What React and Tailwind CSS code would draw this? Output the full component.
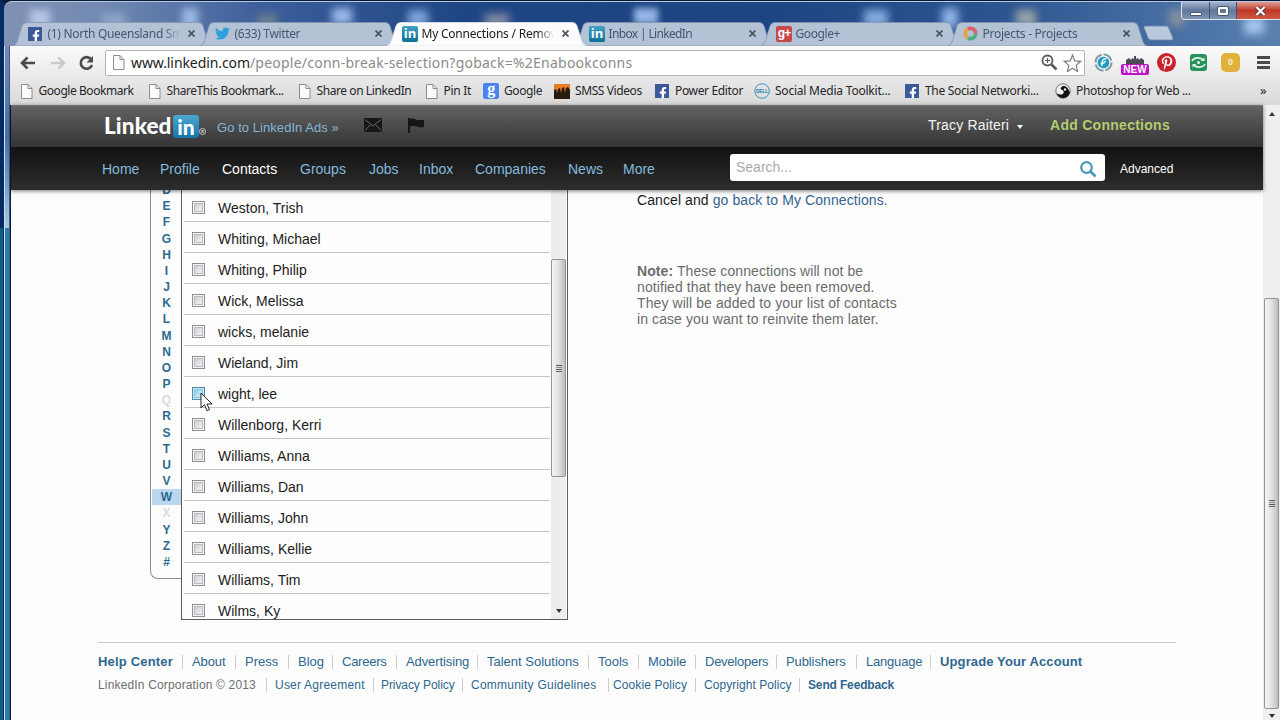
import { FaFacebookF, FaTwitter, FaPinterestP } from 'react-icons/fa'

const names = [
  'Weston, Trish', 'Whiting, Michael', 'Whiting, Philip', 'Wick, Melissa', 'wicks, melanie',
  'Wieland, Jim', 'wight, lee', 'Willenborg, Kerri', 'Williams, Anna', 'Williams, Dan',
  'Williams, John', 'Williams, Kellie', 'Williams, Tim', 'Wilms, Ky',
]

const letters = 'DEFGHIJKLMNOPQRSTUVWXYZ#'.split('')
const emptyLetters = ['Q', 'X']

const tabs = [
  { title: '(1) North Queensland Sm', icon: 'facebook', track: 'tracking-[-0.3px]' },
  { title: '(633) Twitter', icon: 'twitter', track: 'tracking-[-0.35px]' },
  { title: 'My Connections / Remove', icon: 'linkedin', track: 'tracking-[-0.22px]', active: true },
  { title: 'Inbox | LinkedIn', icon: 'linkedin', track: 'tracking-[-0.65px]' },
  { title: 'Google+', icon: 'gplus', track: 'tracking-[-0.4px]' },
  { title: 'Projects - Projects', icon: 'ring', track: 'tracking-[-0.27px]' },
]

const bookmarks = [
  { label: 'Google Bookmark', icon: 'page', box: 'w-[128px]', track: 'tracking-[-0.45px]' },
  { label: 'ShareThis Bookmark...', icon: 'page', box: 'w-[150px]', track: 'tracking-[-0.42px]' },
  { label: 'Share on LinkedIn', icon: 'page', box: 'w-[127px]', track: 'tracking-[-0.42px]' },
  { label: 'Pin It', icon: 'page', box: 'w-[57px]', track: 'tracking-[-0.3px]' },
  { label: 'Google', icon: 'google', box: 'w-[71px]', track: 'tracking-[-0.4px]' },
  { label: 'SMSS Videos', icon: 'smss', box: 'w-[101px]', track: 'tracking-[-0.4px]' },
  { label: 'Power Editor', icon: 'facebook', box: 'w-[99px]', track: 'tracking-[-0.35px]' },
  { label: 'Social Media Toolkit...', icon: 'dell', box: 'w-[151px]', track: 'tracking-[-0.22px]' },
  { label: 'The Social Networki...', icon: 'facebook', box: 'w-[150px]', track: 'tracking-[-0.32px]' },
  { label: 'Photoshop for Web ...', icon: 'yin', box: 'w-[200px]', track: 'tracking-[-0.34px]' },
]

const nav = [
  { label: 'Home', box: 'w-[58px]' },
  { label: 'Profile', box: 'w-[62px]' },
  { label: 'Contacts', box: 'w-[78px]', current: true },
  { label: 'Groups', box: 'w-[69px]' },
  { label: 'Jobs', box: 'w-[50px]' },
  { label: 'Inbox', box: 'w-[56px]' },
  { label: 'Companies', box: 'w-[93px]' },
  { label: 'News', box: 'w-[55px]' },
  { label: 'More', box: 'w-[40px]' },
]

const footerTop = [
  { label: 'Help Center', box: 'w-[84px] font-bold tracking-[0.18px]' },
  { label: 'About', box: 'w-[53px] tracking-[-0.1px]' },
  { label: 'Press', box: 'w-[53px]' },
  { label: 'Blog', box: 'w-[44px]' },
  { label: 'Careers', box: 'w-[64px] tracking-[-0.25px]' },
  { label: 'Advertising', box: 'w-[81px] tracking-[-0.1px]' },
  { label: 'Talent Solutions', box: 'w-[111px]' },
  { label: 'Tools', box: 'w-[50px]' },
  { label: 'Mobile', box: 'w-[57px]' },
  { label: 'Developers', box: 'w-[81px] tracking-[-0.25px]' },
  { label: 'Publishers', box: 'w-[80px] tracking-[-0.1px]' },
  { label: 'Language', box: 'w-[74px] tracking-[-0.2px]' },
  { label: 'Upgrade Your Account', box: 'font-bold tracking-[0.12px]' },
]

const footerBottom = [
  { label: 'User Agreement', box: 'w-[107px] pl-2 tracking-[0.22px]' },
  { label: 'Privacy Policy', box: 'w-[89px] pl-[7px] tracking-[-0.08px]' },
  { label: 'Community Guidelines', box: 'w-[146px] pl-2 tracking-[0.24px]' },
  { label: 'Cookie Policy', box: 'w-[87px] pl-1 tracking-[0.1px]' },
  { label: 'Copyright Policy', box: 'w-[104px] pl-2 tracking-[0.05px]' },
  { label: 'Send Feedback', box: 'pl-2 font-bold tracking-[-0.15px]' },
]

function PageIcon() {
  return (
    <svg width="12" height="15" viewBox="0 0 12 15" fill="#fafafa" stroke="#8c8c8c">
      <path d="M.5.5h6.5l4 4v10H.5z" />
      <path d="M7 .5v4h4" fill="none" />
    </svg>
  )
}

function SiteIcon({ name }) {
  switch (name) {
    case 'facebook':
      return (
        <div className="flex h-3.5 w-3.5 items-end justify-end overflow-hidden bg-[#3b5998] text-white">
          <FaFacebookF size={12} className="-mb-px" />
        </div>
      )
    case 'twitter':
      return <FaTwitter size={15} color="#2da2d8" />
    case 'linkedin':
      return (
        <div className="flex h-4 w-4 items-center justify-center rounded-xs bg-gradient-to-b from-[#3fa3c4] to-[#0e6f96] pb-px font-['Open_Sans',sans-serif] text-[13px] leading-none font-bold text-white">
          in
        </div>
      )
    case 'gplus':
      return (
        <div className="flex h-4 w-4 items-center justify-center rounded-xs bg-[#c9494b] pb-0.5 font-['Liberation_Sans',sans-serif] text-[12px] leading-none font-bold tracking-[-1px] text-white">
          g+
        </div>
      )
    case 'ring':
      return (
        <svg width="15" height="15" viewBox="0 0 16 16" fill="none" strokeWidth="4">
          <circle cx="8" cy="8" r="5.5" stroke="#4bb08a" pathLength="3" strokeDasharray="1 2" />
          <circle cx="8" cy="8" r="5.5" stroke="#e2a34b" pathLength="3" strokeDasharray="1 2" strokeDashoffset="-1" />
          <circle cx="8" cy="8" r="5.5" stroke="#d9606c" pathLength="3" strokeDasharray="1 2" strokeDashoffset="-2" />
        </svg>
      )
    case 'google':
      return (
        <div className="flex h-4 w-4 items-center justify-center rounded-xs bg-[#4a83ee] pb-1 font-['Liberation_Serif',serif] text-[16px] leading-none font-bold text-white">
          g
        </div>
      )
    case 'smss':
      return (
        <svg width="16" height="15" viewBox="0 0 16 15">
          <path d="M0 0h16v15H0z" fill="#e87f22" />
          <path d="M0 6l2-1 1 4 1-4 2-1 1 5 1-5 2-1 1 6 1-5 2-1 2 3v9H0z" fill="#2a1b10" />
        </svg>
      )
    case 'dell':
      return (
        <svg width="16" height="16" viewBox="0 0 16 16">
          <circle cx="8" cy="8" r="7.3" fill="none" stroke="#3a96c4" />
          <text x="8" y="10" textAnchor="middle" fontFamily="Liberation Sans" fontSize="5" fontWeight="700" fill="#1c7fb5">DELL</text>
        </svg>
      )
    case 'yin':
      return (
        <svg width="16" height="16" viewBox="0 0 16 16">
          <circle cx="8" cy="8" r="7.2" fill="#f4f4f4" stroke="#555" strokeWidth="0.8" />
          <path d="M1.500 10c3 2 6 2 7 0s-1-3-3-4C6 3 9 2 11.500 4S14 9 15 9c-1 4-4 6-7 6s-5.500-2-6.500-5z" fill="#111" />
          <circle cx="10" cy="6.500" r="1.300" fill="#eee" />
        </svg>
      )
    default:
      return <PageIcon />
  }
}

function Tab({ tab }) {
  return (
    <div className={tab.active ? 'relative z-10 h-6 w-[187px] shrink-0' : 'relative h-6 w-[187px] shrink-0'}>
      <svg className="absolute top-0 left-0" width="199" height="24" viewBox="0 0 199 24">
        <path
          d="M0 24C3 23 4 20 5 17L9 4Q10 .5 14 .5H185Q189 .5 190 4L194 17C195 20 196 23 199 24z"
          fill={tab.active ? '#fcfcfd' : '#b3c2d5'}
          stroke={tab.active ? '#dfe6ee' : '#8497b4'}
          strokeWidth="0.8"
        />
      </svg>
      <div className="relative flex h-[23px] items-center pl-[15px]">
        <div className="flex w-[19.5px] shrink-0 items-center">
          <SiteIcon name={tab.icon} />
        </div>
        <div
          className={`w-[132px] overflow-hidden text-[12px] whitespace-nowrap [mask-image:linear-gradient(to_right,#000_88%,transparent)] ${tab.track} ${tab.active ? 'text-[#1c1c1c]' : 'text-[#46566c]'}`}
        >
          {tab.title}
        </div>
        <svg className="ml-[8px] shrink-0" width="7" height="7" viewBox="0 0 7 7" stroke="#4c5664" strokeWidth="1.8">
          <path d="M.5.5l6 6M6.500.5l-6 6" />
        </svg>
      </div>
    </div>
  )
}

// desktop icons showing through the glass title bar
function GlassBlobs() {
  return (
    <div className="absolute inset-0 overflow-hidden">
      <div className="absolute top-2 left-[26px] h-4 w-5 bg-[#b8cbe8] blur-[4px]" />
      <div className="absolute top-3 left-[98px] h-3 w-6 bg-[#8fa8c8] blur-[4px]" />
      <div className="absolute top-1.5 left-[178px] h-5 w-4 bg-[#9dbbe6] blur-[4px]" />
      <div className="absolute top-3 left-[253px] h-3 w-5 bg-[#6d7f8c] blur-[4px]" />
      <div className="absolute top-1.5 left-[328px] h-4 w-5 bg-[#9bbcec] blur-[4px]" />
      <div className="absolute top-2 left-[404px] h-4 w-5 bg-[#7ea6dc] blur-[4px]" />
      <div className="absolute top-3 left-[481px] h-3 w-6 bg-[#8b8fa4] blur-[4px]" />
      <div className="absolute top-1.5 left-[630px] h-4 w-6 bg-[#94b5e4] blur-[3px]" />
      <div className="absolute top-2 left-[860px] h-4 w-6 bg-[#88ade0] blur-[4px]" />
      <div className="absolute top-1.5 left-[938px] h-5 w-4 bg-[#8fb4e6] blur-[4px]" />
      <div className="absolute top-2 left-[1012px] h-4 w-5 bg-[#98a5a8] blur-[4px]" />
      <div className="absolute top-2 left-[1165px] h-4 w-4 bg-[#8590a0] blur-[4px]" />
      <div className="absolute top-4 left-[1240px] h-4 w-5 bg-[#a5c8f0] blur-[4px]" />
    </div>
  )
}

function TitleBar() {
  return (
    <div className="relative flex h-[45px] items-end justify-between rounded-tl-lg border-t border-[#b9cbe4] bg-[linear-gradient(to_right,#7f92b4,#7189b2_8%,#3d5f9b_20%,#1f4684_36%,#1d4583_60%,#2c5590_78%,#5a80b0)]">
      <GlassBlobs />
      <div className="relative flex pl-[9px]">
        {tabs.map((tab) => (
          <Tab key={tab.title} tab={tab} />
        ))}
        <svg className="mt-[3px] ml-[8px]" width="32" height="16" viewBox="0 0 32 16">
          <path d="M1 2.500Q.5 1 2.500 1H23Q25 1 25.500 2.500L30 13Q30.500 15 28.500 15H8Q6 15 5 13z" fill="#b9c8dc" stroke="#6d86ab" strokeWidth="0.8" />
        </svg>
      </div>
      <div className="relative flex h-[18px] self-start overflow-hidden rounded-bl border-b border-l border-white/80">
        <div className="flex w-[28px] items-center justify-center border-r border-[#41546f] bg-gradient-to-b from-[#a4b4cb] via-[#61789c] to-[#7f95b5] pt-1.5">
          <div className="h-[4px] w-3 rounded-[1px] border border-[#4a5870] bg-white" />
        </div>
        <div className="flex w-[27px] items-center justify-center border-r border-[#41546f] bg-gradient-to-b from-[#a4b4cb] via-[#61789c] to-[#7f95b5]">
          <div className="h-[8px] w-[10px] rounded-[1px] border-2 border-white outline outline-[#4a5870]" />
        </div>
        <div className="flex w-[43px] items-center justify-center bg-gradient-to-b from-[#dd9a90] via-[#bf3527] to-[#cf5a43] pl-1">
          <svg width="11" height="10" viewBox="0 0 11 10">
            <path d="M1.500 1l8 8M9.500 1l-8 8" stroke="#5d2b2b" strokeWidth="4" />
            <path d="M1.500 1l8 8M9.500 1l-8 8" stroke="#fff" strokeWidth="2.4" />
          </svg>
        </div>
      </div>
    </div>
  )
}

function Toolbar() {
  return (
    <div className="flex h-[33px] items-center">
      <div className="flex w-[95px] items-center pl-[9px]">
        <svg width="80" height="18" viewBox="0 0 80 18" fill="none" strokeWidth="2.6">
          <path d="M16 9H3M8.500 3.500L3 9l5.500 5.500" stroke="#4b4b4b" />
          <path d="M32 9h13M39.500 3.500L45 9l-5.500 5.500" stroke="#cbcbcb" />
          <path d="M72 5.200A5.800 5.800 0 1 0 73 11" stroke="#4b4b4b" />
          <path d="M74 2v6.500h-6.500z" fill="#4b4b4b" />
        </svg>
      </div>
      <div className="flex h-[26px] w-[980px] items-center rounded-xs border border-[#b4b4b4] bg-white pl-[7px]">
        <PageIcon />
        <div className="ml-[6px] flex-1 text-[14px] whitespace-nowrap text-[#8b8b8b]">
          <span className="tracking-[-0.09px] text-[#1d1d1d]">www.linkedin.com</span>
          <span className="tracking-[0.23px]">/people/conn-break-selection?goback=%2Enabookconns</span>
        </div>
        <svg width="17" height="17" viewBox="0 0 17 17" fill="none" stroke="#5b5b5b">
          <circle cx="6.5" cy="6.5" r="5" strokeWidth="1.8" />
          <path d="M6.500 4v5M4 6.500h5" strokeWidth="1.2" />
          <path d="M10.500 10.500l5 5" strokeWidth="2.6" />
        </svg>
        <svg className="mr-[2px] ml-[5px]" width="19" height="18" viewBox="0 0 19 18" fill="#fff" stroke="#7d7d7d" strokeWidth="1.2">
          <path d="M9.500 1l2.200 5.900 6 .4-4.500 4.100 1.300 6-5-3.200-5 3.200 1.300-6L1.300 7.300l6-.4z" />
        </svg>
      </div>
      <div className="flex flex-1 items-center pl-[9px]">
        <svg width="19" height="19" viewBox="0 0 19 19" fill="none">
          <circle cx="9.5" cy="9.5" r="8" stroke="#7f9da6" strokeWidth="2.2" strokeDasharray="10.5 2" />
          <circle cx="9.5" cy="9.5" r="5.8" fill="#1f9dbd" />
          <path d="M12.500 5.500C8 6 8 8 8 13M6.500 10.500c3 .5 4-.5 5-2.500" stroke="#e8f6fa" strokeWidth="1.6" />
        </svg>
        <div className="ml-[8px] flex w-[28px] flex-col items-center pt-[6px]">
          <svg width="18" height="8" viewBox="0 0 18 8" fill="#4c4c58">
            <path d="M0 8V4l3-2 2 2 1-2 2 1V0h2v3l2-1 1 2 2-2 3 2v4z" />
          </svg>
          <div className="flex h-[11px] w-[28px] items-center justify-center rounded-xs bg-[#c010c8] font-['Liberation_Sans',sans-serif] text-[10px] font-bold text-white">
            NEW
          </div>
        </div>
        <div className="ml-2 flex h-[19px] w-[19px] items-center justify-center rounded-full bg-[#c8232c] text-white">
          <FaPinterestP size={14} />
        </div>
        <div className="ml-[14px] flex h-[17px] w-[17px] items-center justify-center rounded-[3px] bg-[#27935a]">
          <svg width="15" height="13" viewBox="0 0 15 13" fill="none" stroke="#e6f5ec" strokeWidth="1.6">
            <path d="M1 5C3 1 10 1 12 4M14 8C12 12 5 12 3 9" />
            <path d="M13.500 1.500v3.500h-4zM1.500 11.500V8h4z" fill="#e6f5ec" stroke="none" />
            <circle cx="7.5" cy="6.5" r="1.5" fill="#e6f5ec" stroke="none" />
          </svg>
        </div>
        <div className="ml-[14px] flex h-[19px] w-[19px] items-center justify-center rounded-[5px] bg-[#e2b13b] font-['Liberation_Sans',sans-serif] text-[9px] font-bold text-[#fbf0cf]">
          0
        </div>
        <div className="ml-[17px] flex w-[13px] flex-col gap-[2px]">
          <div className="h-[3px] bg-[#4a4a4a]" />
          <div className="h-[3px] bg-[#4a4a4a]" />
          <div className="h-[3px] bg-[#4a4a4a]" />
        </div>
      </div>
    </div>
  )
}

function BookmarksBar() {
  return (
    <div className="flex h-[26px] items-start pt-[3px] pl-[11px] text-[12px] text-[#262626]">
      {bookmarks.map((b) => (
        <div key={b.label} className={`flex h-[18px] shrink-0 items-center whitespace-nowrap ${b.box} ${b.track}`}>
          <div className={b.icon === 'page' ? 'w-[17.5px]' : b.icon === 'facebook' ? 'w-[20px]' : 'w-[21px]'}>
            <SiteIcon name={b.icon} />
          </div>
          {b.label}
        </div>
      ))}
      <div className="ml-[5px] leading-4 text-[13px]">»</div>
    </div>
  )
}

function SiteHeader() {
  return (
    <header className="relative z-10 shadow-[0_1px_4px_rgba(0,0,0,0.55)]">
      <div className="flex h-[42px] items-center border-t border-[#757575] bg-gradient-to-b from-[#636363] to-[#343434] pl-[93px]">
        <div className="flex items-center font-['Lato',sans-serif] font-black">
          <div className="w-[69px] text-[22.5px] leading-none tracking-[0.1px] text-white">Linked</div>
          <div className="flex h-[23px] w-[26px] items-center justify-center rounded-[3px] bg-gradient-to-b from-[#4aa8d0] to-[#1474a8] text-[21px] leading-none text-white">
            in
          </div>
          <div className="mt-2.5 flex h-[7px] w-[7px] items-center justify-center rounded-full border border-[#c9c9c9] text-[4px] text-[#ddd]">
            R
          </div>
        </div>
        <a className="ml-[11px] w-[147px] pt-0.5 text-[13px] tracking-[0.06px] text-[#83b6d6]">Go to LinkedIn Ads »</a>
        <svg className="mb-[3px]" width="18" height="14" viewBox="0 0 18 14">
          <path d="M0 0h18v14H0z" fill="#161616" />
          <path d="M1 1.500l8 6.500 8-6.500M1 12.500l5.500-6M17 12.500l-5.500-6" fill="none" stroke="#6a6a6a" />
        </svg>
        <svg className="mb-[3px] ml-[26px]" width="17" height="15" viewBox="0 0 17 15" fill="#161616">
          <path d="M0 0h2v15H0zM2 1c3-1 5 0 7 1h7v7c-3 .5-5 .5-7-.5-3-.8-5-.5-7 0z" />
        </svg>
        <div className="mb-0.5 ml-[503px] text-[14px] tracking-[0.17px] text-[#f4f4f4]">Tracy Raiteri</div>
        <div className="ml-2 border-x-[3.5px] border-t-4 border-x-transparent border-t-white" />
        <a className="mb-0.5 ml-[27px] text-[14px] font-bold tracking-[0.27px] text-[#b3cd70]">Add Connections</a>
      </div>
      <nav className="flex h-[43px] items-center bg-gradient-to-b from-[#121212] to-[#2d2d2d] pl-[91px] text-[14px] text-[#83bbdf]">
        {nav.map((n) => (
          <a key={n.label} className={`pt-0.5 ${n.box} ${n.current ? 'text-white' : ''}`}>{n.label}</a>
        ))}
        <div className="mb-[3px] ml-[67px] flex h-[27px] w-[375px] items-center justify-between rounded-[3px] bg-white pr-2 pl-1.5 text-[#ababab]">
          Search...
          <svg className="mt-[3px]" width="18" height="18" viewBox="0 0 18 18" fill="none" stroke="#4b97b8">
            <circle cx="7.5" cy="7.5" r="5.3" strokeWidth="2.2" />
            <path d="M11.500 11.500l5 5" strokeWidth="2.6" />
          </svg>
        </div>
        <a className="ml-[15px] text-[12px] text-white">Advanced</a>
      </nav>
    </header>
  )
}

function ContactList() {
  return (
    <div className="relative flex h-[430px] w-[387px] overflow-hidden border-x border-b border-[#5c5c5c] bg-[#fdfdfd] text-[14px] text-[#1c1c1c]">
      <ul className="mt-px ml-0.5 w-[366px]">
        {names.map((name) => {
          const hovered = name === 'wight, lee'
          return (
            <li key={name} className="flex h-[31px] shrink-0 items-center gap-[13px] border-b border-[#c4c4c4] pl-2">
              <span
                className={`mt-0.5 h-[13px] w-[13px] border p-px ${hovered ? 'border-[#4a8bab] bg-[#cdeafa]' : 'border-[#8e8f8f] bg-[#f4f4f4]'}`}
              >
                <span
                  className={`block h-full w-full border bg-gradient-to-br ${hovered ? 'border-[#8cc5e0] from-[#8fcdeb] to-[#d8f0fb]' : 'border-[#b9bcc0] from-[#cbcfd3] to-[#f3f3f3]'}`}
                />
              </span>
              <span className="pt-1">{name}</span>
            </li>
          )
        })}
      </ul>
      <div className="ml-px flex w-[15px] flex-col items-center bg-[#ededed] pt-[69px]">
        <ScrollThumb size="h-[218px]" />
        <div className="mt-[132px] border-x-[3.5px] border-t-4 border-x-transparent border-t-[#333]" />
      </div>
      <svg className="absolute top-[202px] left-[18px]" width="13" height="20" viewBox="0 0 13 20">
        <path d="M1 1v15l3.500-3.300 2.500 6 2.500-1-2.500-5.700H12z" fill="#fff" stroke="#222" />
      </svg>
    </div>
  )
}

function ScrollThumb({ size }) {
  return (
    <div className={`flex w-[15px] shrink-0 flex-col items-center justify-center gap-px rounded-xs border border-[#929292] bg-gradient-to-r from-[#f4f4f4] via-[#e2e2e2] to-[#bdbdbd] ${size}`}>
      <div className="h-px w-[6px] bg-[#555]" />
      <div className="h-px w-[6px] bg-[#888]" />
      <div className="h-px w-[6px] bg-[#555]" />
      <div className="h-px w-[6px] bg-[#666]" />
    </div>
  )
}

function LetterIndex() {
  return (
    <div className="h-[389px] w-[31px] overflow-hidden rounded-bl-lg border-b border-l border-[#8e8e8e] pl-px">
      <div className="-mt-2">
        {letters.map((l) => (
          <div
            key={l}
            className={`h-[16.18px] text-center text-[12px] leading-4 font-bold ${l === 'W' ? 'bg-[#bad7ef]' : ''} ${emptyLetters.includes(l) ? 'text-[#dedad6]' : 'text-[#2c6b92]'}`}
          >
            {l}
          </div>
        ))}
      </div>
    </div>
  )
}

function Footer() {
  return (
    <footer className="mt-[22px] ml-[87px] w-[1078px] border-t border-[#c8c8c8] text-[#2f678f]">
      <div className="mt-3 flex h-[14px] items-center text-[13px]">
        {footerTop.map((f) => (
          <a
            key={f.label}
            className={`flex h-[14px] shrink-0 items-center border-l border-[#cdcdcd] pl-[9px] whitespace-nowrap first:border-l-0 first:pl-0 ${f.box}`}
          >
            {f.label}
          </a>
        ))}
      </div>
      <div className="mt-[9px] flex h-[14px] items-center text-[12px]">
        <span className="w-[168px] tracking-[0.16px] text-[#6e6e6e]">LinkedIn Corporation © 2013</span>
        {footerBottom.map((f) => (
          <a key={f.label} className={`flex h-[14px] shrink-0 items-center border-l border-[#cdcdcd] whitespace-nowrap ${f.box}`}>
            {f.label}
          </a>
        ))}
      </div>
    </footer>
  )
}

export default function App() {
  return (
    <div className="flex h-[720px] w-[1280px] overflow-hidden bg-[#061a38] pt-px font-['Noto_Sans',sans-serif]">
      <div className="w-1 shrink-0">
        <div className="h-[227px] bg-[#042b62]" />
        <div className="h-[492px] border-r border-[#0a2c48] bg-[#135a86]" />
      </div>
      <div className="flex min-w-0 flex-1 flex-col">
        <TitleBar />
        <div className="flex min-h-0 flex-1">
          <div className="w-1.5 shrink-0 border-r border-l border-r-[#37618c] border-l-[#cfe0f0]">
            <div className="h-[182px] bg-gradient-to-b from-[#7389b3] via-[#4d70aa] to-[#a9c7e4]" />
            <div className="h-[500px] bg-[#2d7aa8]" />
          </div>
          <div className="flex min-w-0 flex-1 flex-col">
            <div className="bg-gradient-to-b from-[#fbfbfc] to-[#d9d9d9]">
              <Toolbar />
              <BookmarksBar />
            </div>
            <div className="flex flex-1 font-['Liberation_Sans',sans-serif]">
              <div className="ml-px flex w-[1252px] flex-col bg-[#fdfdfe]">
                <SiteHeader />
                <div className="flex h-[430px] pl-[139px]">
                  <LetterIndex />
                  <ContactList />
                  <div className="pt-0.5 pl-[69px] text-[14px] leading-4">
                    <p className="tracking-[0.09px] text-[#1c1c1c]">
                      Cancel and <a className="text-[#35648f]">go back to My Connections.</a>
                    </p>
                    <p className="mt-[55px] w-[270px] tracking-[0.09px] text-[#6c6c6c]">
                      <b>Note:</b> These connections will not be<br />
                      notified that they have been removed.<br />
                      They will be added to your list of contacts<br />
                      in case you want to reinvite them later.
                    </p>
                  </div>
                </div>
                <Footer />
              </div>
              <div className="flex flex-1 flex-col items-center bg-[#efefef]">
                <div className="mt-[7px] mb-[182px] border-x-[3.5px] border-b-4 border-x-transparent border-b-[#333]" />
                <ScrollThumb size="h-[411px]" />
                <div className="mt-[5px] border-x-[3.5px] border-t-4 border-x-transparent border-t-[#333]" />
              </div>
            </div>
          </div>
        </div>
      </div>
    </div>
  )
}
